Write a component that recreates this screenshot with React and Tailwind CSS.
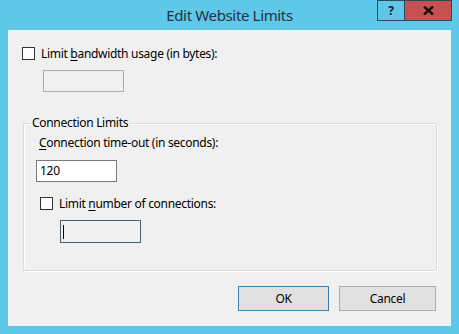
import React from "react";

function Checkbox() {
  return <div className="w-[13px] h-[13px] border border-[#333333] bg-white shrink-0" />;
}

export default function App() {
  return (
    <div
      className="w-[459px] h-[334px] bg-[#5fc7e8] flex flex-col overflow-hidden text-[#000000]"
      style={{ fontFamily: '"Noto Sans", "Liberation Sans", sans-serif' }}
    >
      {/* title bar */}
      <div className="h-[30px] flex items-start shrink-0">
        <div className="flex-1 h-[30px] flex items-center justify-center pl-[82px] text-[15px] tracking-[-0.35px] text-[#1c3443]">
          Edit Website Limits
        </div>
        <div className="flex mr-[7px]">
          <div className="w-[28px] h-[21px] border border-[#2e4a5a] bg-[#5fc7e8] flex items-center justify-center text-[12px] font-bold text-[#102030]">
            ?
          </div>
          <div className="w-[47px] h-[21px] border border-l-0 border-[#2e4a5a] bg-[#c75050] flex items-center justify-center">
            <svg width="11" height="9" viewBox="0 0 11 9">
              <path d="M1 0.5 L10 8.5 M10 0.5 L1 8.5" stroke="#1a0a0a" strokeWidth="2.4" />
            </svg>
          </div>
        </div>
      </div>
      {/* client */}
      <div className="mx-[8px] h-[296px] bg-[#f0f0f0] border border-[#e6f3f8] flex flex-col text-[12px] tracking-[-0.3px]">
        <div className="flex items-center mt-[16px] ml-[13px] h-[13px]">
          <Checkbox />
          <span className="ml-[6px] leading-none">
            Limit <span className="underline underline-offset-2">b</span>andwidth usage (in bytes):
          </span>
        </div>
        <div className="ml-[34px] mt-[10px] w-[81px] h-[22px] border border-[#adadad] bg-[#f0f0f0]" />

        <fieldset className="ml-[14px] mt-[23px] w-[414px] h-[156px] border border-[#dcdcdc] shadow-[inset_1px_1px_0_#ffffff,1px_1px_0_#ffffff] px-0">
          <legend className="ml-[7px] px-[1px] text-[12px] leading-[16px]">Connection Limits</legend>
          <div className="ml-[15px] mt-[4px] leading-[16px]">
            <span className="underline underline-offset-2">C</span>onnection time-out (in seconds):
          </div>
          <div className="ml-[12px] mt-[9px] w-[81px] h-[22px] border border-[#7a7a7a] bg-white flex items-center pl-[3px] leading-none">
            120
          </div>
          <div className="flex items-center ml-[16px] mt-[15px] h-[13px]">
            <Checkbox />
            <span className="ml-[6px] leading-none">
              Limit <span className="underline underline-offset-2">n</span>umber of connections:
            </span>
          </div>
          <div className="ml-[36px] mt-[10px] w-[81px] h-[23px] border border-[#4f5f6f] bg-[#f0f0f0] flex items-center pl-[2px]">
            <div className="w-[1px] h-[14px] bg-black" />
          </div>
        </fieldset>

        <div className="flex justify-end mt-[15px] mr-[14px] gap-[10px]">
          <button className="w-[91px] h-[25px] border border-[#3c7fb1] bg-[#e1e1e1] text-[12px] leading-none">
            OK
          </button>
          <button className="w-[97px] h-[25px] border border-[#adadad] bg-[#e1e1e1] text-[12px] leading-none">
            Cancel
          </button>
        </div>
      </div>
    </div>
  );
}
